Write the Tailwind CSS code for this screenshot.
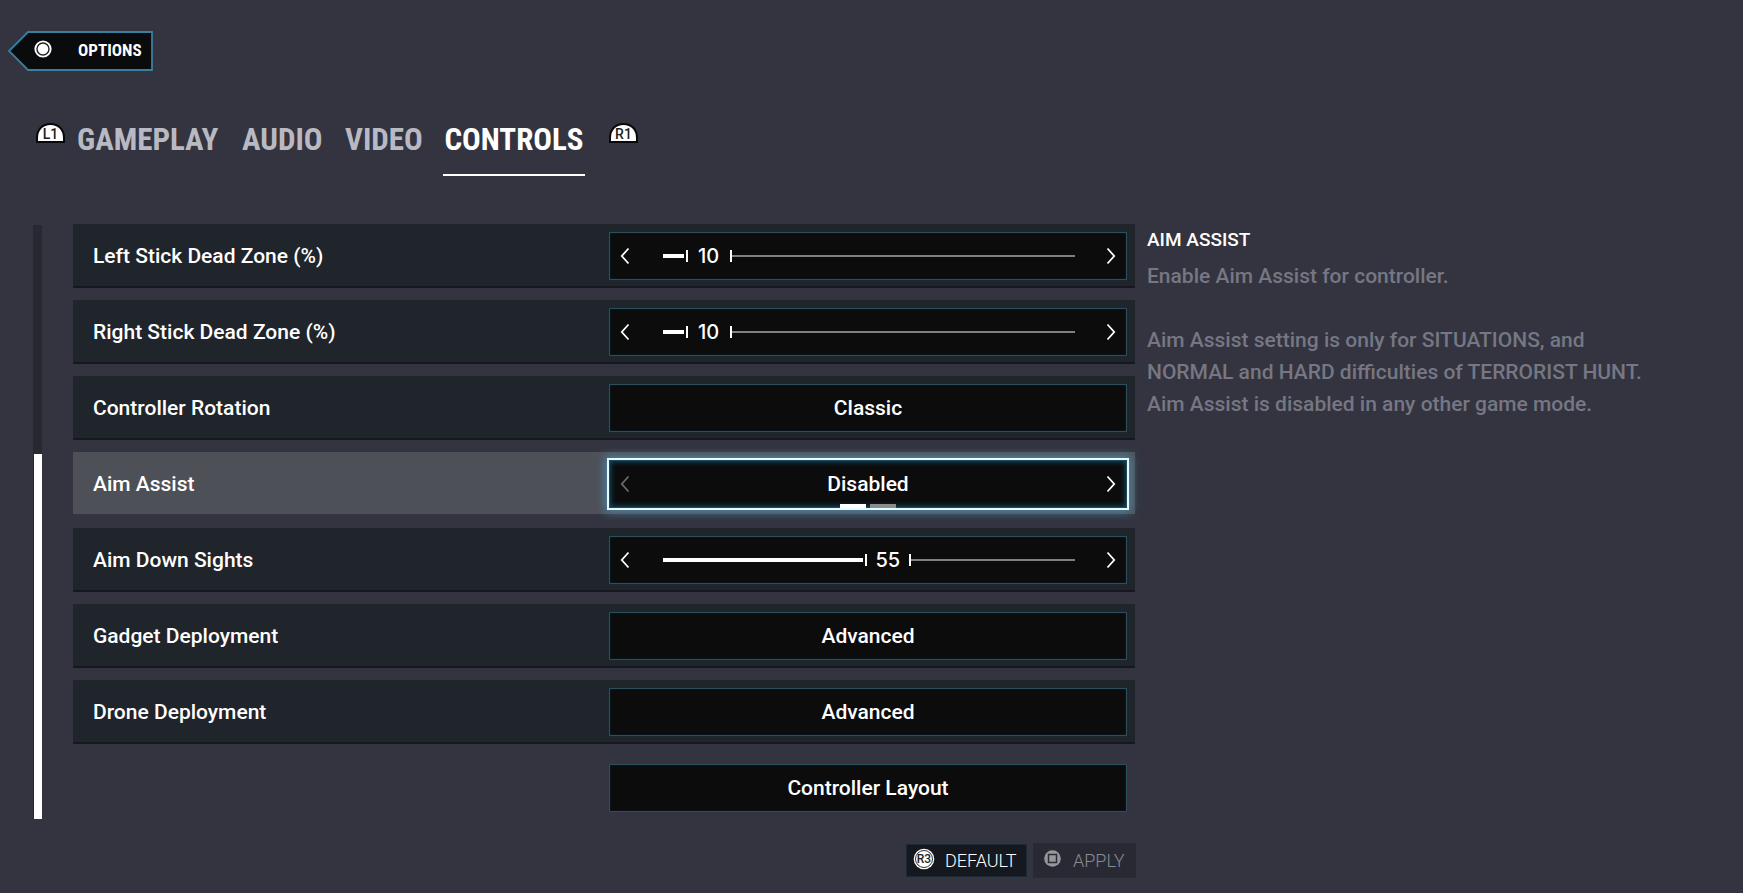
<!DOCTYPE html>
<html lang="en">
<head>
<meta charset="utf-8">
<meta name="viewport" content="width=device-width, initial-scale=1">
<title>Options – Controls</title>
<script src="https://cdn.jsdelivr.net/npm/@tailwindcss/browser@4"></script>
</head>
<body class="min-h-screen bg-[#33343f] text-white font-['Roboto','Liberation_Sans',sans-serif]">
<svg class="hidden" aria-hidden="true">
  <symbol id="prev" viewBox="0 0 10 18"><path d="M8.5 1.5 1.8 9l6.700 7.500" fill="none" stroke="currentColor" stroke-width="1.8"/></symbol>
  <symbol id="next" viewBox="0 0 10 18"><path d="M1.5 1.5 8.2 9l-6.700 7.500" fill="none" stroke="currentColor" stroke-width="1.8"/></symbol>
</svg>

<header class="pt-[31px] pl-2">
  <button type="button" class="relative flex h-10 w-[145px] items-center pl-[26px] font-bold font-['Roboto_Condensed','Liberation_Sans_Narrow','Liberation_Sans',sans-serif] text-[17px]">
    <svg class="absolute inset-0 size-full" viewBox="0 0 145 40" aria-hidden="true"><path d="M1 20 20 1h124v38H20z" fill="#0a0b0d" stroke="#3a7f9f" stroke-width="1.8"/></svg>
    <svg class="relative mb-1 size-[18px]" viewBox="0 0 18 18" aria-hidden="true"><circle cx="9" cy="9" r="8.6" fill="#fff"/><circle cx="9" cy="9" r="6" fill="#fff" stroke="#222" stroke-width="1.4"/></svg>
    <span class="relative ml-[26px]">OPTIONS</span>
  </button>
</header>

<nav class="mt-[46px] flex items-start pl-9 font-bold font-['Roboto_Condensed','Liberation_Sans_Narrow','Liberation_Sans',sans-serif] text-[31px] text-[#b9b9c3]" aria-label="Settings sections">
  <svg class="mt-[6px] h-5 w-[29px] shrink-0" viewBox="0 0 29 20" role="img" aria-label="L1"><path d="M1 19v-4C1 6.500 6.500 1 14.500 1S28 6.500 28 15v4z" fill="#fff" stroke="#08080b" stroke-width="2"/><text x="14.500" y="15.500" text-anchor="middle" font-family="Roboto" font-weight="500" font-size="14" fill="#222">L1</text></svg>
  <a href="#gameplay" class="ml-3 w-[141px] leading-[46px]">GAMEPLAY</a>
  <a href="#audio" class="ml-6 w-[79px] leading-[46px]">AUDIO</a>
  <a href="#video" class="ml-6 w-[76px] leading-[46px]">VIDEO</a>
  <a href="#controls" aria-current="page" class="ml-[22px] h-[59px] w-[142px] border-b-2 border-white text-center leading-[46px] text-white">CONTROLS</a>
  <svg class="ml-6 mt-[6px] h-5 w-[29px] shrink-0" viewBox="0 0 29 20" role="img" aria-label="R1"><path d="M1 19v-4C1 6.500 6.500 1 14.500 1S28 6.500 28 15v4z" fill="#fff" stroke="#08080b" stroke-width="2"/><text x="14.500" y="15.500" text-anchor="middle" font-family="Roboto" font-weight="500" font-size="14" fill="#222">R1</text></svg>
</nav>

<main class="mt-12 flex pl-[33px]">
  <div class="mt-px mb-px flex w-[9px] shrink-0 flex-col self-stretch bg-[#262a30] pl-px" role="scrollbar" aria-controls="settings" aria-valuenow="100" aria-orientation="vertical">
    <div class="mt-auto bg-white" style="height:61.5%"></div>
  </div>
  <div class="ml-[31px] grid grow grid-cols-[1062fr_596fr] gap-3">
    <form id="settings" class="flex flex-col gap-3 text-[21px] font-medium">

      <div class="grid grid-cols-[516fr_518fr] items-center border-b-2 border-[#15181f] bg-[#20242b] pt-2 pb-[6px] pl-5 pr-2">
        <label for="left-zone" class="pt-[2px]">Left Stick Dead Zone (%)</label>
        <div class="flex h-12 items-center justify-between border border-[#2b4f5b] bg-[#0c0c0c] px-[10px] shadow-[inset_0_0_0_1px_#07151b,0_0_0_1px_#1a272f]">
          <button type="button" aria-label="Decrease"><svg class="h-[18px] w-[10px]"><use href="#prev"/></svg></button>
          <div class="relative mr-[31px] ml-[33px] flex grow items-center">
            <div class="h-1 bg-white" style="width:5%"></div>
            <output for="left-zone" class="ml-[2px] flex h-3 w-[46px] shrink-0 items-center justify-center border-x-2 border-white font-['Inter',sans-serif] text-[20px]">10</output>
            <div class="h-[2px] grow bg-[#808080]"></div>
            <input id="left-zone" type="range" value="10" class="absolute inset-0 w-full opacity-0">
          </div>
          <button type="button" aria-label="Increase"><svg class="h-[18px] w-[10px]"><use href="#next"/></svg></button>
        </div>
      </div>

      <div class="grid grid-cols-[516fr_518fr] items-center border-b-2 border-[#15181f] bg-[#20242b] pt-2 pb-[6px] pl-5 pr-2">
        <label for="right-zone" class="pt-[2px]">Right Stick Dead Zone (%)</label>
        <div class="flex h-12 items-center justify-between border border-[#2b4f5b] bg-[#0c0c0c] px-[10px] shadow-[inset_0_0_0_1px_#07151b,0_0_0_1px_#1a272f]">
          <button type="button" aria-label="Decrease"><svg class="h-[18px] w-[10px]"><use href="#prev"/></svg></button>
          <div class="relative mr-[31px] ml-[33px] flex grow items-center">
            <div class="h-1 bg-white" style="width:5%"></div>
            <output for="right-zone" class="ml-[2px] flex h-3 w-[46px] shrink-0 items-center justify-center border-x-2 border-white font-['Inter',sans-serif] text-[20px]">10</output>
            <div class="h-[2px] grow bg-[#808080]"></div>
            <input id="right-zone" type="range" value="10" class="absolute inset-0 w-full opacity-0">
          </div>
          <button type="button" aria-label="Increase"><svg class="h-[18px] w-[10px]"><use href="#next"/></svg></button>
        </div>
      </div>

      <div class="grid grid-cols-[516fr_518fr] items-center border-b-2 border-[#15181f] bg-[#20242b] pt-2 pb-[6px] pl-5 pr-2">
        <label for="rotation" class="pt-[2px]">Controller Rotation</label>
        <select id="rotation" class="h-12 w-full appearance-none border border-[#2b4f5b] bg-[#0c0c0c] pt-[2px] text-center shadow-[inset_0_0_0_1px_#07151b,0_0_0_1px_#1a272f] [text-align-last:center]"><option>Classic</option></select>
      </div>

      <div class="mb-[2px] grid grid-cols-[516fr_518fr] items-center bg-[#4e5057] pt-2 pb-[6px] pl-5 pr-2">
        <label for="assist" class="pt-[2px]">Aim Assist</label>
        <div class="relative flex h-12 items-center justify-between border border-[#1c4a5c] bg-[#0c0c0c] px-[10px] shadow-[0_0_0_2px_#e6fbff,0_0_9px_4px_#4f86a6,inset_0_0_5px_1px_#0f4a68]">
          <button type="button" aria-label="Previous" disabled class="text-[#6b6b6b]"><svg class="h-[18px] w-[10px]"><use href="#prev"/></svg></button>
          <select id="assist" class="grow appearance-none bg-transparent pt-[2px] text-center outline-none [text-align-last:center]"><option>Disabled</option><option>Enabled</option></select>
          <button type="button" aria-label="Next"><svg class="h-[18px] w-[10px]"><use href="#next"/></svg></button>
          <div class="absolute inset-x-0 -bottom-px flex justify-center gap-1">
            <span class="h-1 w-[26px] bg-white"></span><span class="h-1 w-[26px] bg-[#8a8d8e]"></span>
          </div>
        </div>
      </div>

      <div class="grid grid-cols-[516fr_518fr] items-center border-b-2 border-[#15181f] bg-[#20242b] pt-2 pb-[6px] pl-5 pr-2">
        <label for="sights" class="pt-[2px]">Aim Down Sights</label>
        <div class="flex h-12 items-center justify-between border border-[#2b4f5b] bg-[#0c0c0c] px-[10px] shadow-[inset_0_0_0_1px_#07151b,0_0_0_1px_#1a272f]">
          <button type="button" aria-label="Decrease"><svg class="h-[18px] w-[10px]"><use href="#prev"/></svg></button>
          <div class="relative mr-[31px] ml-[33px] flex grow items-center">
            <div class="h-1 bg-white" style="width:48.5%"></div>
            <output for="sights" class="ml-[2px] flex h-3 w-[46px] shrink-0 items-center justify-center border-x-2 border-white font-['Inter',sans-serif] text-[20px]">55</output>
            <div class="h-[2px] grow bg-[#808080]"></div>
            <input id="sights" type="range" value="55" class="absolute inset-0 w-full opacity-0">
          </div>
          <button type="button" aria-label="Increase"><svg class="h-[18px] w-[10px]"><use href="#next"/></svg></button>
        </div>
      </div>

      <div class="grid grid-cols-[516fr_518fr] items-center border-b-2 border-[#15181f] bg-[#20242b] pt-2 pb-[6px] pl-5 pr-2">
        <label for="gadget" class="pt-[2px]">Gadget Deployment</label>
        <select id="gadget" class="h-12 w-full appearance-none border border-[#2b4f5b] bg-[#0c0c0c] pt-[2px] text-center shadow-[inset_0_0_0_1px_#07151b,0_0_0_1px_#1a272f] [text-align-last:center]"><option>Advanced</option></select>
      </div>

      <div class="grid grid-cols-[516fr_518fr] items-center border-b-2 border-[#15181f] bg-[#20242b] pt-2 pb-[6px] pl-5 pr-2">
        <label for="drone" class="pt-[2px]">Drone Deployment</label>
        <select id="drone" class="h-12 w-full appearance-none border border-[#2b4f5b] bg-[#0c0c0c] pt-[2px] text-center shadow-[inset_0_0_0_1px_#07151b,0_0_0_1px_#1a272f] [text-align-last:center]"><option>Advanced</option></select>
      </div>

      <div class="grid grid-cols-[516fr_518fr] py-2 pl-5 pr-2">
        <button type="button" class="col-start-2 h-12 border border-[#2b4f5b] bg-[#0c0c0c] pt-[2px] shadow-[inset_0_0_0_1px_#07151b]">Controller Layout</button>
      </div>
    </form>

    <aside class="pt-1 pr-6">
      <h2 class="text-[19px] font-medium leading-6">AIM ASSIST</h2>
      <p class="mt-2 text-[21px] font-medium leading-8 text-[#767783]">Enable Aim Assist for controller.<br><br>Aim Assist setting is only for SITUATIONS, and<br>NORMAL and HARD difficulties of TERRORIST HUNT.<br>Aim Assist is disabled in any other game mode.</p>
    </aside>
  </div>
</main>

<footer class="mt-[23px] grid grid-cols-[1063fr_595fr] gap-3 pl-[73px]">
  <div class="flex items-center justify-end gap-[6px] text-[18px] font-light">
    <button type="button" class="flex h-[33px] w-[121px] items-center gap-[10px] border border-[#1b2a35] bg-[#15181f] pl-[6px]">
      <svg class="mb-1 size-[22px] shrink-0" viewBox="0 0 22 22" aria-hidden="true"><circle cx="11" cy="11" r="10.300" fill="#fff"/><circle cx="11" cy="11" r="8.500" fill="#fff" stroke="#333" stroke-width="1"/><text x="11" y="15.300" text-anchor="middle" font-family="Roboto" font-weight="500" font-size="12" fill="#222">R3</text></svg>
      DEFAULT
    </button>
    <button type="button" disabled class="flex h-[35px] w-[103px] items-center gap-3 bg-[#282933] pl-[11px] text-[#8a8a91]">
      <svg class="mb-1 size-[17px] shrink-0" viewBox="0 0 17 17" aria-hidden="true"><circle cx="8.500" cy="8.500" r="8.300" fill="#98989c"/><rect x="4.500" y="4.500" width="8" height="8" fill="none" stroke="#2b2b33" stroke-width="1.500"/></svg>
      APPLY
    </button>
  </div>
</footer>
</body>
</html>
